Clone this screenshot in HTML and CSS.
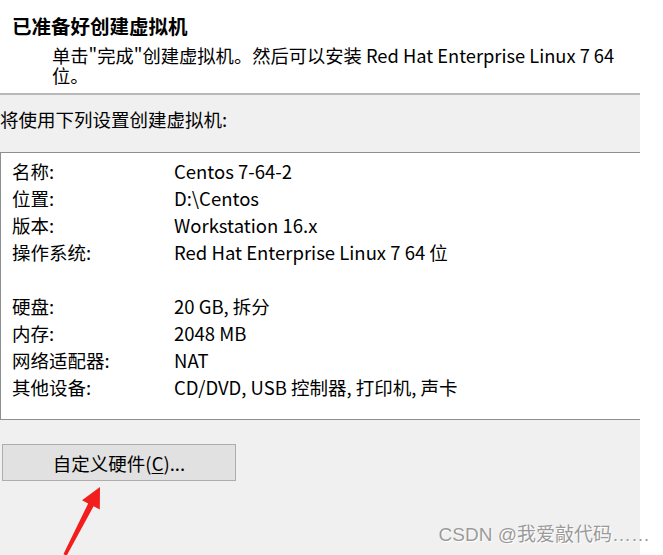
FILE: index.html
```html
<!DOCTYPE html>
<html lang="zh-CN">
<head>
<meta charset="utf-8">
<title>已准备好创建虚拟机</title>
<link rel="stylesheet" href="styles.css">
</head>
<body>
<div class="page">
  <header class="head">
    <h1 class="title">已准备好创建虚拟机</h1>
    <p class="sub"><span class="line">单击"完成"创建虚拟机。然后可以安装 Red Hat Enterprise Linux 7 64</span><span class="line">位。</span></p>
  </header>
  <section class="panel">
    <p class="intro">将使用下列设置创建虚拟机:</p>
    <div class="listing">
      <div class="row"><span class="k">名称:</span><span class="v">Centos 7-64-2</span></div>
      <div class="row"><span class="k">位置:</span><span class="v">D:\Centos</span></div>
      <div class="row"><span class="k">版本:</span><span class="v">Workstation 16.x</span></div>
      <div class="row"><span class="k">操作系统:</span><span class="v">Red Hat Enterprise Linux 7 64 位</span></div>
      <div class="row"></div>
      <div class="row"><span class="k">硬盘:</span><span class="v">20 GB, 拆分</span></div>
      <div class="row"><span class="k">内存:</span><span class="v">2048 MB</span></div>
      <div class="row"><span class="k">网络适配器:</span><span class="v">NAT</span></div>
      <div class="row"><span class="k">其他设备:</span><span class="v">CD/DVD, USB 控制器, 打印机, 声卡</span></div>
    </div>
    <button class="btn" type="button">自定义硬件(<u>C</u>)...</button>
  </section>
  <svg class="arrow" width="120" height="80" viewBox="40 480 120 80" aria-hidden="true">
    <polygon points="100,487 99.8,509.4 93.6,506.2 66.5,556 63.5,554 88.2,503.4 82,500.2" fill="#f21d1d"/>
  </svg>
  <div class="mark">CSDN @我爱敲代码……</div>
</div>
</body>
</html>
```
FILE: styles.css
```css
html, body {
  margin: 0;
  padding: 0;
  background: #ffffff;
}
body {
  font-family: "Noto Sans CJK SC", "Noto Sans", sans-serif;
  color: #000;
  width: 663px;
  height: 555px;
  overflow: hidden;
}
.page {
  position: relative;
  width: 663px;
  height: 555px;
}
.head {
  height: 93px;
  box-sizing: border-box;
  padding: 14px 0 0 12px;
}
.title {
  margin: 0;
  font-size: 19.5px;
  font-weight: bold;
  line-height: 24px;
}
.sub {
  margin: 7px 0 0 40px;
  font-size: 18.3px;
  display: flex;
  flex-direction: column;
}
.line {
  display: block;
  height: 20px;
  line-height: 20px;
  white-space: nowrap;
}
.panel {
  width: 640px;
  height: 462px;
  box-sizing: border-box;
  background: #f0f0f0;
  border-top: 2px solid #b8b8b8;
  padding-top: 14px;
}
.intro {
  margin: 0;
  font-size: 18.5px;
  line-height: 20px;
}
.listing {
  margin-top: 23px;
  background: #fff;
  border: 1px solid #8e8f94;
  border-right: none;
  width: 640px;
  box-sizing: border-box;
  padding: 4px 0 19px 11px;
}
.row {
  display: flex;
  height: 27px;
  align-items: center;
  font-size: 18.5px;
}
.k {
  width: 162px;
}
.btn {
  display: block;
  margin: 24px 0 0 2px;
  width: 234px;
  height: 37px;
  background: #e1e1e1;
  border: 1px solid #adadad;
  font-family: "Noto Sans CJK SC", "Noto Sans", sans-serif;
  font-size: 18.5px;
  color: #000;
  padding: 0;
}
.btn u {
  text-underline-offset: 2px;
}
.arrow {
  position: absolute;
  left: 40px;
  top: 480px;
}
.mark {
  position: absolute;
  right: 13px;
  top: 524px;
  font-family: "Liberation Sans", "Noto Sans CJK SC", sans-serif;
  font-size: 19px;
  line-height: 22px;
  color: #9a9a9a;
  text-shadow: 0 0 1px #fff, 1px 1px 0 #fff;
  white-space: nowrap;
}
```
